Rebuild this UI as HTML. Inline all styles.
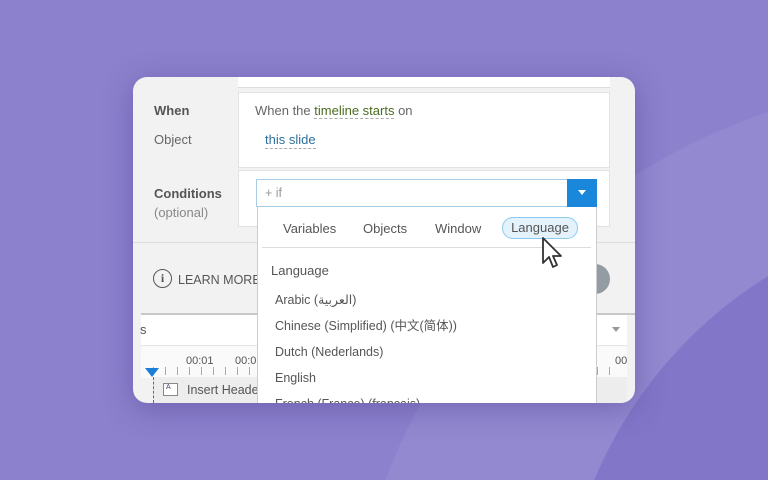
<!DOCTYPE html>
<html><head><meta charset="utf-8"><style>
*{margin:0;padding:0;box-sizing:border-box}
html,body{width:768px;height:480px;overflow:hidden}
body{position:relative;font-family:"Liberation Sans","Noto Sans CJK SC",sans-serif;background:#8b81cd}
.bg{position:absolute;left:0;top:0;width:768px;height:480px;overflow:hidden}
.c1{position:absolute;left:345px;top:80px;width:1240px;height:1240px;border-radius:50%;background:#9289d1}
.c2{position:absolute;left:560px;top:210px;width:880px;height:880px;border-radius:50%;background:#8176c8}
.card{position:absolute;left:133px;top:77px;width:502px;height:326px;border-radius:14px;background:#f2f2f2;overflow:hidden;box-shadow:0 6px 30px rgba(60,40,120,.35)}
.a{position:absolute;line-height:1.2}
.lbl{color:#666;font-size:13px}
.b{font-weight:bold;color:#555}
.w{background:#fff}
.item{position:absolute;left:275px;font-size:12.5px;color:#555;line-height:15px;white-space:nowrap}
</style></head><body>
<div class="bg"><div class="c1"></div><div class="c2"></div></div>
<div class="card">
 <div class="a w" style="left:105px;top:0;width:372px;height:11px;border-bottom:1px solid #ddd"></div>
 <div class="a w" style="left:105px;top:15px;width:372px;height:76px;border:1px solid #e2e2e2"></div>
 <div class="a w" style="left:105px;top:93px;width:372px;height:57px;border:1px solid #e2e2e2"></div>
 <div class="a lbl b" style="left:21px;top:26px">When</div>
 <div class="a lbl" style="left:21px;top:55px">Object</div>
 <div class="a lbl" style="left:122px;top:26px">When the <span style="color:#4b6b1f;border-bottom:1px dashed #aaa">timeline starts</span> on</div>
 <div class="a lbl" style="left:132px;top:55px;color:#2f6f9a;border-bottom:1px dashed #aaa">this slide</div>
 <div class="a lbl b" style="left:21px;top:109px">Conditions</div>
 <div class="a lbl" style="left:21px;top:128px;color:#888">(optional)</div>
 <div class="a" style="left:0;top:165px;width:502px;height:1px;background:#ddd"></div>
 <div class="a" style="left:20px;top:192px;width:19px;height:19px;border:1.5px solid #555;border-radius:50%;font:bold 12px 'Liberation Serif',serif;color:#555;text-align:center;line-height:16px">i</div>
 <div class="a" style="left:45px;top:196px;font-size:12.5px;color:#555">LEARN MORE</div>
 <div class="a" style="left:447px;top:187px;width:30px;height:30px;border-radius:50%;background:#949ba2"></div>
 <div class="a" style="left:8px;top:236px;width:494px;height:2px;background:#c8c8c8"></div>
 <div class="a w" style="left:8px;top:238px;width:486px;height:30px"></div>
 <div class="a" style="left:7px;top:245px;font-size:13px;color:#555">s</div>
 <div class="a" style="left:479px;top:250px;border:4px solid transparent;border-top:5px solid #999"></div>
 <div class="a" style="left:8px;top:268px;width:486px;height:33px;background:#fafafa;border-top:1px solid #e4e4e4"></div>
 <div class="a" style="left:53px;top:278px;font-size:11px;color:#555">00:01</div>
 <div class="a" style="left:102px;top:278px;font-size:11px;color:#555">00:0</div>
 <div class="a" style="left:482px;top:278px;font-size:11px;color:#555">00</div>
 <div class="a" style="left:20px;top:290px;width:460px;height:8px;background:repeating-linear-gradient(90deg,#aaa 0 1px,transparent 1px 12px)"></div>
 <div class="a" style="left:12px;top:291px;border:7px solid transparent;border-top:9px solid #1a7fd6;border-bottom:0"></div>
 <div class="a" style="left:20px;top:300px;width:0;height:26px;border-left:1px dashed #1a7fd6"></div>
 <div class="a" style="left:21px;top:300px;width:473px;height:26px;background:#ededed"></div>
 <div class="a" style="left:30px;top:306px;width:15px;height:13px;border:1px solid #888;background:#fff;font-size:7px;color:#447;padding-left:2px">A</div>
 <div class="a" style="left:54px;top:306px;font-size:12.5px;color:#555">Insert Header</div>
</div>
<div class="a w" style="left:256px;top:179px;width:341px;height:28px;border:1px solid #a8cce6"></div>
<div class="a" style="left:265px;top:186px;font-size:12.5px;color:#999">+ if</div>
<div class="a" style="left:567px;top:179px;width:30px;height:28px;background:#1a87da"></div>
<div class="a" style="left:578px;top:190px;border:4px solid transparent;border-top:5px solid #fff"></div>
<div class="a w" style="left:257px;top:207px;width:340px;height:196px;border-left:1px solid #ccc;border-right:1px solid #ccc"></div>
<div class="a" style="left:283px;top:221px;font-size:13px;color:#555">Variables</div>
<div class="a" style="left:363px;top:221px;font-size:13px;color:#555">Objects</div>
<div class="a" style="left:435px;top:221px;font-size:13px;color:#555">Window</div>
<div class="a" style="left:502px;top:217px;width:76px;height:22px;border:1.5px solid #8ec9ec;background:#e3f2fb;border-radius:11px;font-size:13px;color:#555;text-align:center;line-height:19px">Language</div>
<div class="a" style="left:262px;top:247px;width:329px;height:1px;background:#ddd"></div>
<div class="a" style="left:271px;top:263px;font-size:13px;color:#555">Language</div>
<div class="item" style="top:293px">Arabic (العربية)</div>
<div class="item" style="top:319px">Chinese (Simplified) (中文(简体))</div>
<div class="item" style="top:345px">Dutch (Nederlands)</div>
<div class="item" style="top:371px">English</div>
<div class="item" style="top:397px;height:6px;overflow:hidden">French (France) (français)</div>
<svg class="a" style="left:540px;top:236px" width="28" height="38" viewBox="0 0 28 38"><path d="M3 2 L3 27 L9 21 L13 31 L17 29 L13 20 L21 20 Z" fill="#fff" stroke="#333" stroke-width="1.8" stroke-linejoin="round"/></svg>
</body></html>
